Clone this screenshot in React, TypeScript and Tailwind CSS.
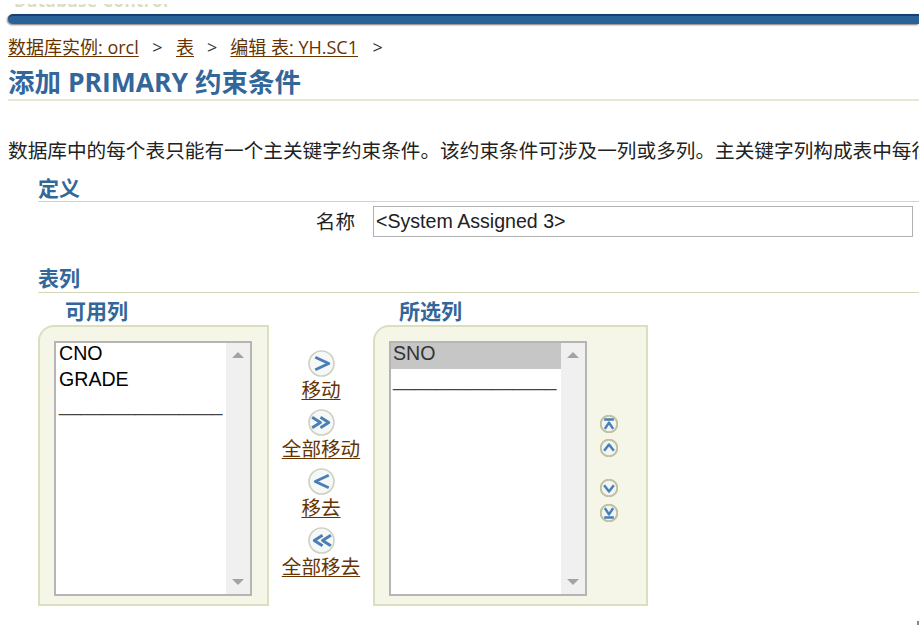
const cjk = "font-['Open_Sans','Noto_Sans_CJK_SC',sans-serif]";
const arial = "font-['Liberation_Sans','Noto_Sans_CJK_SC',sans-serif]";

function RoundIcon({ size, kind }: { size: number; kind: string }) {
  const paths: Record<string, string> = {
    right: "M7 7 L20 13 L7 19",
    left: "M20 7 L7 13 L20 19",
    rightAll: "M4 8 L12 13 L4 18 M12 8 L20 13 L12 18",
    leftAll: "M22 8 L14 13 L22 18 M14 8 L6 13 L14 18",
    top: "M6 6.5 H20 M7 20 L13 11 L19 20",
    up: "M6 17 L13 8 L20 17",
    down: "M6 9 L13 18 L20 9",
    bottom: "M7 6 L13 15 L19 6 M6 19.5 H20",
  };
  const small = size < 24;
  return (
    <svg width={size} height={size} viewBox="0 0 26 26" className="shrink-0">
      <circle cx="13" cy="13" r="12" fill={small ? "#f3f5f4" : "#f6f8f8"} stroke={small ? "#bfc1a2" : "#cfd1c2"} strokeWidth={small ? 3 : 1.6} />
      <path d={paths[kind]} fill="none" stroke="#4a7fb5" strokeWidth={small ? 3.6 : 2.8} strokeLinejoin="round" />
    </svg>
  );
}

function Scrollbar() {
  return (
    <div className="w-[24px] shrink-0 bg-[#f0f0f0] flex flex-col items-center justify-between pt-[9px] pb-[9px]">
      <div className="w-0 h-0 border-x-[6px] border-x-transparent border-b-[6px] border-b-[#a3a3a3]" />
      <div className="w-0 h-0 border-x-[6px] border-x-transparent border-t-[6px] border-t-[#a3a3a3]" />
    </div>
  );
}

function ListBox({ items, selected }: { items: string[]; selected?: string }) {
  const pad = selected ? "pl-[2px]" : "pl-[3px]";
  return (
    <div className="w-[198px] h-[255px] flex border-2 border-[#b5b5b5] bg-white">
      <div className={`flex-1 min-w-0 overflow-hidden text-[19.6px] leading-[21px] text-black ${arial}`}>
        {items.map((it) => (
          <div key={it} className={it === selected ? `${pad} pb-[4.5px] bg-[#c6c6c6] text-[#333333]` : `${pad} pb-[4.5px]`}>
            {it}
          </div>
        ))}
        <div className={`${pad} whitespace-nowrap text-[#444444]`}>_______________</div>
      </div>
      <Scrollbar />
    </div>
  );
}

function MoveButton({ kind, label }: { kind: string; label: string }) {
  return (
    <div className="h-[59px] flex flex-col items-center">
      <RoundIcon size={27} kind={kind} />
      <a className={`text-[19.6px] leading-[26px] underline underline-offset-2 text-[#663300] whitespace-nowrap ${cjk}`}>{label}</a>
    </div>
  );
}

function Section({ title, extra = "" }: { title: string; extra?: string }) {
  return (
    <div className={`ml-[38px] border-b border-[#d5d8b8] ${extra}`}>
      <h2 className={`text-[21px] leading-[26px] font-bold text-[#336699] ${cjk}`}>{title}</h2>
    </div>
  );
}

export default function App() {
  return (
    <div className={`relative w-[919px] h-[632px] overflow-hidden bg-white ${cjk}`}>
      <div className="h-[8px] pt-[4px] pl-[14px]">
        <div className="h-[3px] overflow-hidden">
          <div className="-mt-[13px] text-[17px] leading-[20px] font-bold text-[#dcdcc0] tracking-wide">Database Control</div>
        </div>
      </div>
      <div className="mt-[6px] ml-[8px] h-[10px] rounded-l-full bg-[#2b6296] border-t-2 border-[#17406e] shadow-[-1px_1px_2px_#777777]" />

      <nav className="mt-[10px] pl-[8px] h-[26px] flex items-center text-[18px] text-[#663300] whitespace-nowrap">
        <a className="underline underline-offset-2">数据库实例: orcl</a>
        <span className="mx-[13.5px] text-[#333333]">&gt;</span>
        <a className="underline underline-offset-2">表</a>
        <span className="mx-[13px] text-[#333333]">&gt;</span>
        <a className="underline underline-offset-2">编辑 表: YH.SC1</a>
        <span className="ml-[14.5px] text-[#333333]">&gt;</span>
      </nav>

      <div className="ml-[8px] mt-[6px] border-b-2 border-[#e6e8d4]">
        <h1 className="text-[26.5px] leading-[33px] font-bold text-[#336699] whitespace-nowrap">添加 PRIMARY 约束条件</h1>
      </div>

      <p className="mt-[37px] pl-[8px] text-[19.65px] leading-[26px] text-[#222222] whitespace-nowrap">
        数据库中的每个表只能有一个主关键字约束条件。该约束条件可涉及一列或多列。主关键字列构成表中每行的唯一标识。
      </p>

      <div className="mt-[11px]">
        <Section title="定义" />
      </div>
      <div className="mt-[4px] flex items-center">
        <label className="w-[355px] text-right text-[19.6px] text-[#222222]">名称</label>
        <div className={`ml-[18px] w-[540px] h-[31px] border border-[#b0b0b0] pl-[2px] flex items-center text-[19.6px] text-[#222222] ${arial}`}>
          &lt;System Assigned 3&gt;
        </div>
      </div>

      <div className="mt-[28px]">
        <Section title="表列" extra="pb-[1px]" />
      </div>

      <div className="ml-[38px] mt-[4px] flex">
        <div className="w-[231px]">
          <h3 className="pl-[27px] text-[21px] leading-[28px] font-bold text-[#336699]">可用列</h3>
          <div className="h-[281px] rounded-tl-[16px] border-2 border-[#dadfbd] bg-[#f5f6e7] pl-[14px] pt-[14px]">
            <ListBox items={["CNO", "GRADE"]} />
          </div>
        </div>

        <div className="w-[104px] pt-[53px] flex flex-col items-center">
          <MoveButton kind="right" label="移动" />
          <MoveButton kind="rightAll" label="全部移动" />
          <MoveButton kind="left" label="移去" />
          <MoveButton kind="leftAll" label="全部移去" />
        </div>

        <div className="w-[275px]">
          <h3 className="pl-[26px] text-[21px] leading-[28px] font-bold text-[#336699]">所选列</h3>
          <div className="h-[281px] rounded-tl-[16px] border-2 border-[#dadfbd] bg-[#f5f6e7] pl-[14px] pt-[14px] flex">
            <ListBox items={["SNO"]} selected="SNO" />
            <div className="ml-[13px] pt-[74px] flex flex-col items-center">
              <RoundIcon size={18} kind="top" />
              <div className="mt-[6px]"><RoundIcon size={18} kind="up" /></div>
              <div className="mt-[22px]"><RoundIcon size={18} kind="down" /></div>
              <div className="mt-[7px]"><RoundIcon size={18} kind="bottom" /></div>
            </div>
          </div>
        </div>
      </div>

      <div className="absolute left-[917px] top-[621px] w-[2px] h-[4px] bg-[#888888]" />
    </div>
  );
}
